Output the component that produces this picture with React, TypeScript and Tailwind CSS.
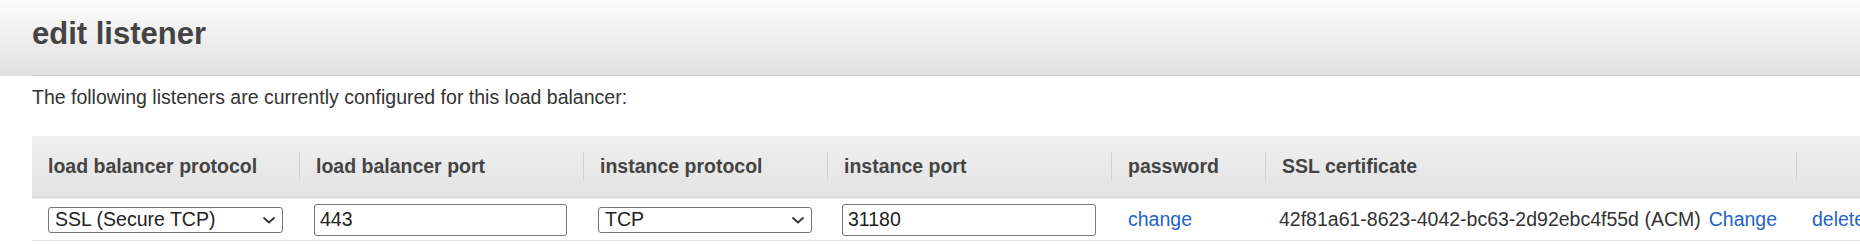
import React from 'react';

const columns = [
  { label: 'load balancer protocol', width: 267 },
  { label: 'load balancer port', width: 284 },
  { label: 'instance protocol', width: 244 },
  { label: 'instance port', width: 284 },
  { label: 'password', width: 154 },
  { label: 'SSL certificate', width: 531 },
  { label: '', width: 150 },
];

function Chevron() {
  return (
    <svg width="14" height="8" viewBox="0 0 14 8" className="shrink-0">
      <polyline points="1.5,1.5 7,6.5 12.5,1.5" fill="none" stroke="#333" strokeWidth="1.8" />
    </svg>
  );
}

function FakeSelect({ value, width }: { value: string; width: number }) {
  return (
    <div
      className="h-[26px] flex items-center justify-between border border-[#767676] rounded-[3px] bg-white pl-[6px] pr-[6px] text-[#222]"
      style={{ width }}
    >
      <span className="leading-none">{value}</span>
      <Chevron />
    </div>
  );
}

function FakeInput({ value, width }: { value: string; width: number }) {
  return (
    <div
      className="h-[32px] flex items-center border border-[#767676] rounded-[3px] bg-white pl-[5px] text-[#222]"
      style={{ width }}
    >
      {value}
    </div>
  );
}

export default function App() {
  return (
    <div className="w-full h-[245px] overflow-hidden bg-white text-[19.5px] text-[#333] font-['Liberation_Sans',Arial,sans-serif]">
      <div className="h-[75px] bg-gradient-to-b from-[#fcfcfc] to-[#e1e1e1] pl-8 pt-[16px]">
        <h1 className="text-[31px] leading-[36px] font-bold text-[#444]">edit listener</h1>
      </div>
      <div className="flex h-px">
        <div className="w-8 bg-[#e4e4e4]" />
        <div className="flex-1 bg-[#c6c6c6]" />
      </div>

      <p className="pl-8 mt-[10px] leading-[23.4px]">
        The following listeners are currently configured for this load balancer:
      </p>

      <div className="pl-8 mt-[27px]">
        <table className="table-fixed border-separate border-spacing-0 w-[1914px]">
          <colgroup>
            {columns.map((c, i) => (
              <col key={i} style={{ width: c.width }} />
            ))}
          </colgroup>
          <thead>
            <tr>
              {columns.map((c, i) => (
                <th
                  key={i}
                  className="p-0 text-left font-bold text-[#444] bg-gradient-to-b from-[#f0f0f0] to-[#e2e2e2] border-b border-[#d4d4d4]"
                >
                  <div className="h-[61px] flex items-center">
                    <div
                      className={
                        i === 0
                          ? 'h-[29px] flex items-center pl-4'
                          : 'h-[29px] flex items-center pl-4 border-l border-[#d2d2d2]'
                      }
                    >
                      {c.label}
                    </div>
                  </div>
                </th>
              ))}
            </tr>
          </thead>
          <tbody>
            <tr>
              <td className="p-0 border-t border-b border-t-[#eeeeee] border-b-[#e2e2e2]">
                <div className="h-[41px] flex items-center pl-4">
                  <FakeSelect value="SSL (Secure TCP)" width={235} />
                </div>
              </td>
              <td className="p-0 border-t border-b border-t-[#eeeeee] border-b-[#e2e2e2]">
                <div className="h-[41px] flex items-center pl-[15px]">
                  <FakeInput value="443" width={253} />
                </div>
              </td>
              <td className="p-0 border-t border-b border-t-[#eeeeee] border-b-[#e2e2e2]">
                <div className="h-[41px] flex items-center pl-[15px]">
                  <FakeSelect value="TCP" width={214} />
                </div>
              </td>
              <td className="p-0 border-t border-b border-t-[#eeeeee] border-b-[#e2e2e2]">
                <div className="h-[41px] flex items-center pl-[15px]">
                  <FakeInput value="31180" width={254} />
                </div>
              </td>
              <td className="p-0 border-t border-b border-t-[#eeeeee] border-b-[#e2e2e2]">
                <div className="h-[41px] flex items-center pl-[17px]">
                  <a href="#" className="text-[#1f63c6]">change</a>
                </div>
              </td>
              <td className="p-0 border-t border-b border-t-[#eeeeee] border-b-[#e2e2e2]">
                <div className="h-[41px] flex items-center pl-[14px] whitespace-nowrap">
                  <span>42f81a61-8623-4042-bc63-2d92ebc4f55d (ACM)</span>
                  <a href="#" className="ml-[8px] text-[#1f63c6]">Change</a>
                </div>
              </td>
              <td className="p-0 border-t border-b border-t-[#eeeeee] border-b-[#e2e2e2]">
                <div className="h-[41px] flex items-center pl-4">
                  <a href="#" className="text-[#1f63c6]">delete</a>
                </div>
              </td>
            </tr>
          </tbody>
        </table>
      </div>
    </div>
  );
}
